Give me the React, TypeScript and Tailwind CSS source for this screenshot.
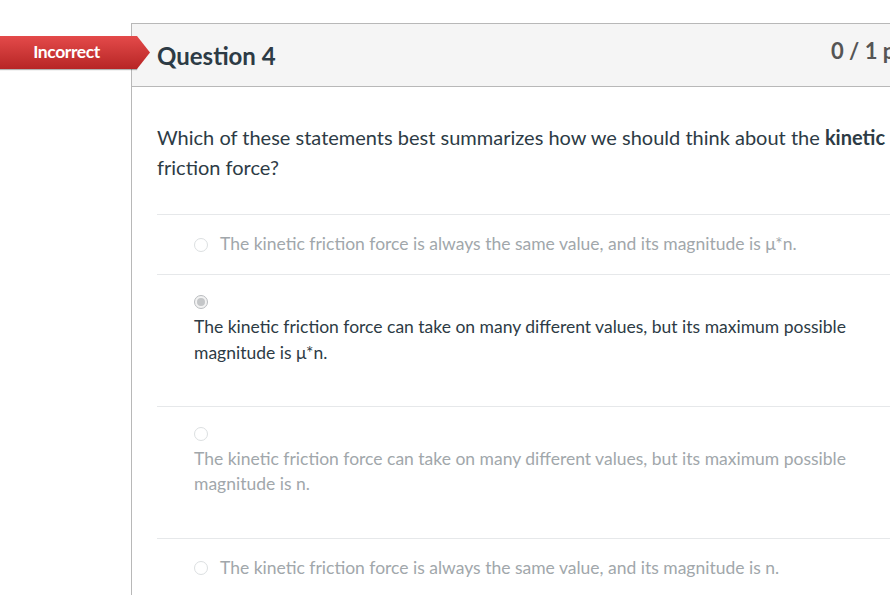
import React from "react";

const dark = "text-[#2d3b45]";
const faded = "text-[#a1a7ab]";

function Radio({ checked }: { checked?: boolean }) {
  return (
    <span
      className={`inline-flex h-[14px] w-[14px] shrink-0 items-center justify-center rounded-full border ${
        checked ? "border-[#b9bcbf] bg-[#f2f2f2]" : "border-[#dcdfe1] bg-white"
      }`}
    >
      {checked && <span className="h-[8px] w-[8px] rounded-full bg-[#c4c6c8]" />}
    </span>
  );
}

export default function App() {
  return (
    <div className="h-[595px] w-[890px] overflow-hidden bg-white font-['Lato','Noto_Sans',sans-serif]">
      <div className="relative flex pt-[23px]">
        {/* incorrect ribbon */}
        <div className="absolute left-0 top-[36px] z-10 flex h-[33px] items-center">
          <div className="flex h-full w-[137px] items-center justify-center bg-gradient-to-b from-[#e44a4a] to-[#b72525] shadow-[0_1px_1px_rgba(0,0,0,0.3)]">
            <span className="pr-[4px] text-[17.5px] font-bold tracking-[-0.4px] text-white">Incorrect</span>
          </div>
          <svg width="13" height="33" viewBox="0 0 13 33" className="block">
            <defs>
              <linearGradient id="rg" x1="0" y1="0" x2="0" y2="1">
                <stop offset="0" stopColor="#e44a4a" />
                <stop offset="1" stopColor="#b72525" />
              </linearGradient>
            </defs>
            <polygon points="0,0 13,16.5 0,33" fill="url(#rg)" />
          </svg>
        </div>

        <div className="w-[131px] shrink-0" />

        <div className="w-[820px] shrink-0 border-l border-t border-[#b8b8b8]">
          <div className="flex h-[63px] border-b border-[#b8b8b8] bg-[#f5f5f5]">
            <h2 className={`w-[699px] shrink-0 pl-[25px] pt-[17px] text-[24px] font-bold leading-[30px] ${dark}`}>
              Question 4
            </h2>
            <div className="whitespace-nowrap pt-[13px] text-[22px] font-bold leading-[28px] text-[#555]">0 / 1 pts</div>
          </div>

          <div className="pl-[25px] pt-[35px]">
            <p className={`w-[760px] text-[20px] leading-[30px] ${dark}`}>
              Which of these statements best summarizes how we should think about the <b>kinetic</b> friction force?
            </p>

            <div className="mt-[32px] border-t border-[#e6e8ea] text-[17.5px]">
              <div className={`flex h-[59px] items-center gap-[12px] pl-[37px] ${faded}`}>
                <Radio />
                <span>The kinetic friction force is always the same value, and its magnitude is μ*n.</span>
              </div>
              <div className={`h-[132px] border-t border-[#e6e8ea] pl-[37px] pt-[15px] leading-[26px] ${dark}`}>
                <div className="flex h-[24px] items-center">
                  <Radio checked />
                </div>
                <div className="w-[680px]">
                  The kinetic friction force can take on many different values, but its maximum possible magnitude is μ*n.
                </div>
              </div>
              <div className={`h-[132px] border-t border-[#e6e8ea] pl-[37px] pt-[15px] leading-[25px] ${faded}`}>
                <div className="flex h-[24px] items-center">
                  <Radio />
                </div>
                <div className="w-[680px]">
                  The kinetic friction force can take on many different values, but its maximum possible magnitude is n.
                </div>
              </div>
              <div className={`flex h-[59px] items-center gap-[12px] border-t border-[#e6e8ea] pl-[37px] ${faded}`}>
                <Radio />
                <span>The kinetic friction force is always the same value, and its magnitude is n.</span>
              </div>
            </div>
          </div>
        </div>
      </div>
    </div>
  );
}
